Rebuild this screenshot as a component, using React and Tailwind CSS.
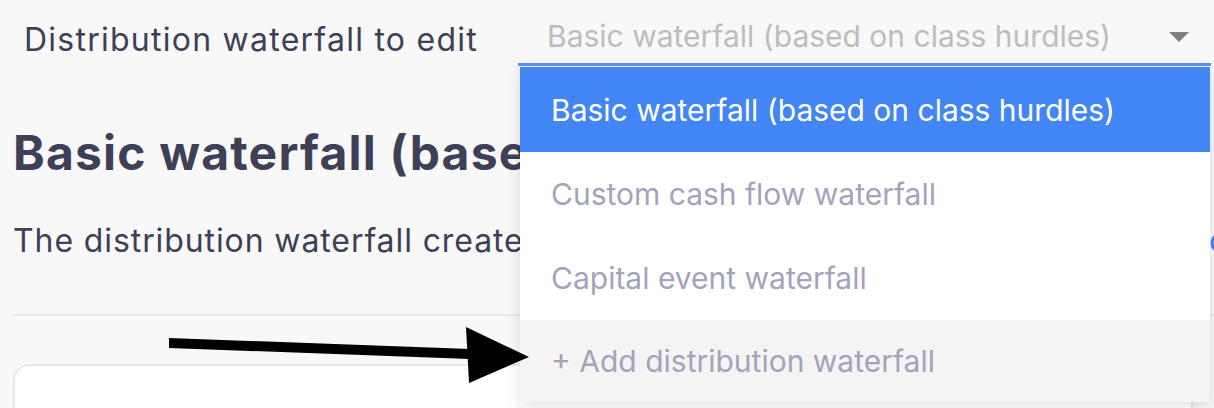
export default function App() {
  const options = [
    'Custom cash flow waterfall',
    'Capital event waterfall',
  ]

  return (
    <div className="relative w-[1214px] h-[408px] overflow-hidden bg-[#f8f8f8] text-[#3d4057] font-['Inter',sans-serif]">
      {/* top row: label + select */}
      <div className="flex h-[67px]">
        <div className="w-[518px] pl-6 pt-6 text-[32px] leading-8 tracking-[1.25px] whitespace-nowrap">
          Distribution waterfall to edit
        </div>
        <div className="w-[693px] h-[66px] flex items-start justify-between border-b-[3px] border-[#5b8ef5]">
          <span className="pl-[29px] pt-[21px] text-[30px] leading-[30px] text-[#bdbdbd] whitespace-nowrap">
            Basic waterfall (based on class hurdles)
          </span>
          <svg className="mt-[32px] mr-[22px]" width="20" height="10" viewBox="0 0 20 10">
            <path d="M0 0h20L10 10z" fill="#808080" />
          </svg>
        </div>
      </div>

      {/* page content */}
      <div className="pl-[13px]">
        <h1 className="mt-[62px] text-[48px] leading-[48px] font-bold tracking-[1.2px] whitespace-nowrap">
          Basic waterfall (based on class hurdles)
        </h1>
        <p className="mt-[48px] flex text-[32px] leading-8 whitespace-nowrap tracking-[0.9px]">
          <span className="w-[1196px] shrink-0 overflow-hidden">
            The distribution waterfall created here is used to calculate distributions
          </span>
          <span className="text-[#3b82f6]">o</span>
        </p>
        <div className="mt-[57px] h-[2px] bg-[#e8e8e8]" />
        <div className="mt-[48px] h-[80px] w-[1180px] bg-white border-2 border-[#e8e8e8] rounded-2xl" />
      </div>

      {/* open dropdown menu */}
      <div className="absolute left-[520px] top-[67px] w-[690px] bg-white shadow-[0_4px_14px_rgba(0,0,0,0.12)] text-[30px] leading-[30px]">
        <div className="h-[85px] flex items-center pl-[31px] bg-[#4285f4] text-white whitespace-nowrap">
          Basic waterfall (based on class hurdles)
        </div>
        {options.map((o) => (
          <div key={o} className="h-[84px] flex items-center pl-[31px] text-[#a3a3bb] whitespace-nowrap">
            {o}
          </div>
        ))}
        <div className="h-[82px] flex items-center pl-[31px] bg-[#f4f4f4] text-[#a3a3bb] whitespace-nowrap">
          + Add distribution waterfall
        </div>
      </div>

      {/* annotation arrow */}
      <svg className="absolute left-0 top-0 pointer-events-none" width="1214" height="408">
        <path d="M169 338 L470 349 L470 359 L169 348 Z" fill="#000" />
        <path d="M466 327 L529 357 L469 383 Z" fill="#000" />
      </svg>
    </div>
  )
}
